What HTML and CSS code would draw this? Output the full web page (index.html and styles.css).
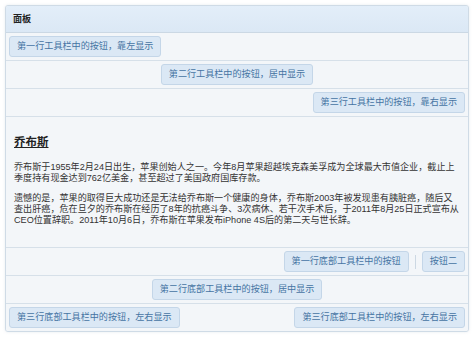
FILE: index.html
```html
<!DOCTYPE html>
<html lang="zh-CN">
<head>
<meta charset="utf-8">
<title>面板</title>
<link rel="stylesheet" href="styles.css">
</head>
<body>
<div class="panel">
  <div class="panel-header">面板</div>
  <div class="toolbar toolbar-top align-left">
    <span class="btn">第一行工具栏中的按钮，靠左显示</span>
  </div>
  <div class="toolbar toolbar-top align-center">
    <span class="btn">第二行工具栏中的按钮，居中显示</span>
  </div>
  <div class="toolbar toolbar-top align-right">
    <span class="btn">第三行工具栏中的按钮，靠右显示</span>
  </div>
  <div class="panel-body">
    <h2 class="title">乔布斯</h2>
    <p>乔布斯于1955年2月24日出生，苹果创始人之一。今年8月苹果超越埃克森美孚成为全球最大市值企业，截止上季度持有现金达到762亿美金，甚至超过了美国政府国库存款。</p>
    <p>遗憾的是，苹果的取得巨大成功还是无法给乔布斯一个健康的身体，乔布斯2003年被发现患有胰脏癌，随后又查出肝癌，危在旦夕的乔布斯在经历了8年的抗癌斗争、3次病休、若干次手术后，于2011年8月25日正式宣布从CEO位置辞职。2011年10月6日，乔布斯在苹果发布iPhone 4S后的第二天与世长辞。</p>
  </div>
  <div class="toolbar toolbar-bottom align-right">
    <span class="btn">第一行底部工具栏中的按钮</span>
    <span class="sep"></span>
    <span class="btn">按钮二</span>
  </div>
  <div class="toolbar toolbar-bottom align-center">
    <span class="btn">第二行底部工具栏中的按钮，居中显示</span>
  </div>
  <div class="toolbar toolbar-bottom align-between">
    <span class="btn">第三行底部工具栏中的按钮，左右显示</span>
    <span class="btn">第三行底部工具栏中的按钮，左右显示</span>
  </div>
</div>
</body>
</html>
```

FILE: styles.css
```css
html, body {
  margin: 0;
  padding: 0;
  background: #ffffff;
}

body {
  padding: 5px;
  font-family: "Liberation Sans", "Noto Sans CJK SC", sans-serif;
  font-size: 9.1px;
  color: #333333;
}

.panel {
  border: 1px solid #cfdbe6;
  border-radius: 3px;
  background: #f3f6f9;
  box-shadow: 0 0 3px rgba(180, 195, 210, 0.35);
  overflow: hidden;
}

.panel-header {
  height: 26px;
  line-height: 26px;
  padding: 0 7px;
  font-weight: bold;
  color: #222222;
  background: linear-gradient(#e3eef9, #dbe8f5);
  border-bottom: 1px solid #cbd8e4;
}

.toolbar {
  display: flex;
  align-items: center;
  padding: 3px;
  background: #f3f6f9;
}

.toolbar-top {
  border-bottom: 1px solid #d6e0e9;
}

.toolbar-bottom {
  border-top: 1px solid #d6e0e9;
}

.align-left { justify-content: flex-start; }
.align-center { justify-content: center; }
.align-right { justify-content: flex-end; }
.align-between { justify-content: space-between; }

.btn {
  display: inline-block;
  height: 19px;
  line-height: 19px;
  padding: 0 7px;
  border: 1px solid #c4d6e8;
  border-radius: 3px;
  background: #dbe8f5;
  color: #4574a3;
  white-space: nowrap;
}

.sep {
  width: 1px;
  height: 14px;
  margin: 0 6px;
  background: #ccd8e3;
}

.panel-body {
  padding: 8px 8px 21px;
  background: #f3f6f9;
}

.title {
  margin: 10px 0 13px;
  font-size: 11.5px;
  line-height: 14px;
  font-weight: bold;
  color: #222222;
  text-decoration: underline;
}

.panel-body p {
  margin: 0 0 9px;
  line-height: 11px;
}

.panel-body p:last-child {
  margin-bottom: 0;
}
```
